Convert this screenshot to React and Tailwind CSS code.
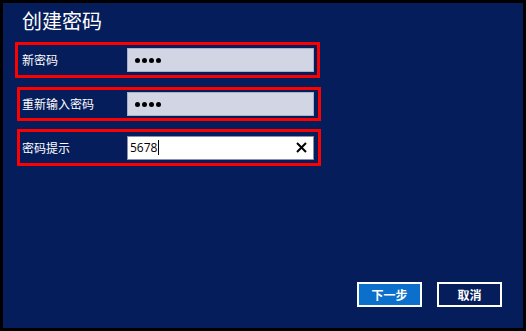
import React from "react";

const cjk = "font-['Noto_Sans_CJK_SC','Noto_Sans',sans-serif]";

const Field = ({ label, className, labelClass, children }) => (
  <div className={`flex items-center border-[3px] border-[#ff0000] ${className}`}>
    <div className={`text-[12px] text-white ${cjk} ${labelClass}`}>{label}</div>
    {children}
  </div>
);

const Dots = () => (
  <div className="flex h-[24px] w-[187px] items-center gap-[2px] border border-[#aab0c6] bg-[#d2d5e3] pl-[7px]">
    {[0, 1, 2, 3].map((i) => (
      <span key={i} className="h-[5px] w-[5px] rounded-full bg-black" />
    ))}
  </div>
);

export default function App() {
  return (
    <div className="h-[331px] w-[526px] bg-black p-[3px]">
      <div className="flex h-full w-full flex-col bg-[#051d5b]">
        <h1 className={`ml-[19px] mt-[4px] text-[20px] leading-[28px] text-white ${cjk}`}>创建密码</h1>

        <div className="ml-[12px] mt-[7px] flex flex-col">
          <Field label="新密码" className="h-[36px] w-[305px]" labelClass="w-[109px] pl-[4px]">
            <Dots />
          </Field>
          <Field label="重新输入密码" className="ml-[2px] mt-[9px] h-[34px] w-[304px]" labelClass="w-[107px] pl-[2px]">
            <Dots />
          </Field>
          <Field label="密码提示" className="ml-[2px] mt-[8px] h-[37px] w-[304px]" labelClass="w-[107px] pl-[2px]">
            <div className="flex h-[24px] w-[187px] items-center border border-[#8a90a8] bg-white pl-[2px] pr-[6px]">
              <span className="font-['Open_Sans',sans-serif] text-[12px] text-black">5678</span>
              <span className="ml-[1px] h-[15px] w-[1px] bg-black" />
              <svg className="ml-auto" width="11" height="11" viewBox="0 0 11 11">
                <path d="M1 1 L10 10 M10 1 L1 10" stroke="#000" strokeWidth="2" />
              </svg>
            </div>
          </Field>
        </div>

        <div className="mt-auto mb-[21px] mr-[21px] flex justify-end gap-[15px]">
          <button className={`h-[25px] w-[65px] border-2 border-white bg-[#0a70cc] text-[12px] font-bold text-white ${cjk}`}>
            下一步
          </button>
          <button className={`h-[25px] w-[65px] border-2 border-white bg-transparent text-[12px] font-bold text-white ${cjk}`}>
            取消
          </button>
        </div>
      </div>
    </div>
  );
}
